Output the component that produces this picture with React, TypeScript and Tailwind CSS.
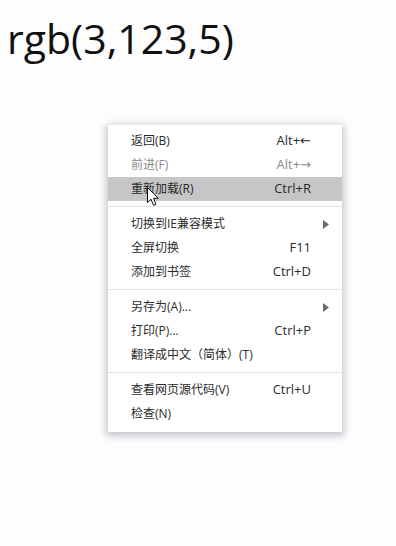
import { ReactNode } from "react";

type Item = {
  label: string;
  shortcut?: ReactNode;
  disabled?: boolean;
  active?: boolean;
  submenu?: boolean;
};

const groups: Item[][] = [
  [
    { label: "返回(B)", shortcut: "Alt+←" },
    { label: "前进(F)", shortcut: "Alt+→", disabled: true },
    { label: "重新加载(R)", shortcut: "Ctrl+R", active: true },
  ],
  [
    { label: "切换到IE兼容模式", submenu: true },
    { label: "全屏切换", shortcut: "F11" },
    { label: "添加到书签", shortcut: "Ctrl+D" },
  ],
  [
    { label: "另存为(A)...", submenu: true },
    { label: "打印(P)...", shortcut: "Ctrl+P" },
    { label: "翻译成中文（简体）(T)" },
  ],
  [
    { label: "查看网页源代码(V)", shortcut: "Ctrl+U" },
    { label: "检查(N)" },
  ],
];

const Cursor = () => (
  <svg width="13" height="20" viewBox="0 0 13 20" className="absolute left-[39px] top-[10px]">
    <path
      d="M0.5 0.5 L0.5 15.5 L4 12.2 L6.6 18.3 L9 17.3 L6.5 11.3 L11.3 11.3 Z"
      fill="#fff"
      stroke="#111"
      strokeWidth="1"
      strokeLinejoin="miter"
    />
  </svg>
);

const Row = ({ item }: { item: Item }) => (
  <div
    className={`relative flex items-center h-6 pl-[23px] ${
      item.active ? "bg-[#c6c6c6]" : ""
    } ${item.disabled ? "text-[#8a8a8a]" : "text-[#2b2b2b]"}`}
  >
    <span className="flex-1 whitespace-nowrap">{item.label}</span>
    {item.shortcut && (
      <span
        className="whitespace-nowrap text-[13px]"
        style={{ fontFamily: '"Open Sans", "DejaVu Sans", sans-serif' }}
      >
        {item.shortcut}
      </span>
    )}
    <span className="w-[31px] flex items-center pl-[12px]">
      {item.submenu && (
        <svg width="6" height="9" viewBox="0 0 6 9">
          <path d="M0 0 L6 4.5 L0 9 Z" fill="#6b6b6b" />
        </svg>
      )}
    </span>
    {item.active && <Cursor />}
  </div>
);

export default function App() {
  return (
    <div
      className="min-h-[546px] bg-[#fdfdfd] pt-[10px]"
      style={{ fontFamily: '"Open Sans", "Noto Sans CJK SC", sans-serif' }}
    >
      <h1 className="pl-[7px] text-[41px] leading-[56px] text-[#111]">rgb(3,123,5)</h1>

      <div className="ml-[108px] mt-[59px] w-[234px] bg-white pt-1 pb-1.5 text-[12px] shadow-[0_2px_7px_2px_rgba(110,110,140,0.4)]">
        {groups.map((g, gi) => (
          <div key={gi}>
            {gi > 0 && <div className="my-[5px] h-px bg-[#e2e2e2]" />}
            {g.map((item) => (
              <Row key={item.label} item={item} />
            ))}
          </div>
        ))}
      </div>
    </div>
  );
}
